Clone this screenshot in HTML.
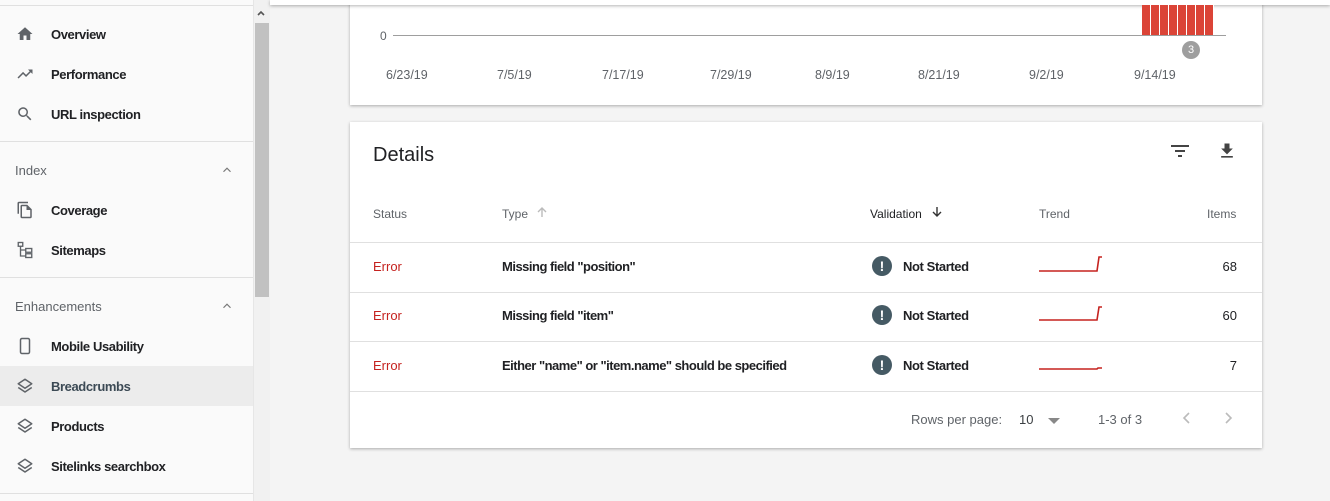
<!DOCTYPE html><html><head><style>
*{margin:0;padding:0;box-sizing:border-box}
body{width:1330px;height:501px;overflow:hidden;background:#f4f4f4;font-family:"Liberation Sans",Arial,sans-serif;position:relative}
.sb{position:absolute;left:0;top:0;width:253px;height:501px;background:#fafafa}
.scroll{position:absolute;left:253px;top:0;width:17px;height:501px;background:#f1f1f1;border-left:1px solid #e6e6e6}
.thumb{position:absolute;left:255px;top:23px;width:14px;height:274px;background:#c1c1c1}
.it{position:absolute;left:0;width:253px;height:40px;display:flex;align-items:center;font-size:13px;font-weight:bold;color:#202124;letter-spacing:-0.4px}
.it svg{position:absolute;left:16px;width:18px;height:18px}
.it span{position:absolute;left:51px}
.hd{position:absolute;left:15px;font-size:13px;color:#5f6368}
.chev{position:absolute;left:220px;width:14px;height:14px}
.line{position:absolute;left:0;width:253px;height:1px;background:#e0e0e0}
.card{position:absolute;left:350px;width:912px;background:#fff;box-shadow:0 1px 3px rgba(0,0,0,.3)}
.lab{position:absolute;top:68px;font-size:12.5px;color:#5f6368}
.th{position:absolute;top:207px;font-size:12px;color:#5f6368}
.row{position:absolute;left:350px;width:912px;height:1px;background:#e0e0e0}
.err{position:absolute;left:373px;font-size:13px;color:#c5221f}
.ty{position:absolute;left:502px;font-size:13px;font-weight:bold;color:#202124;letter-spacing:-0.5px}
.ns{position:absolute;left:903px;font-size:13px;font-weight:bold;color:#202124;letter-spacing:-0.4px}
.ic{position:absolute;left:872px;width:20px;height:20px;border-radius:50%;background:#455a64;color:#fff;font-size:14px;font-weight:bold;text-align:center;line-height:20px}
.num{position:absolute;right:93px;font-size:13px;color:#202124}
</style></head><body>
<div class="sb">
<div class="line" style="top:5px"></div>
<div class="it" style="top:14px"><svg viewBox="0 0 24 24"><path d="M10 20v-6h4v6h5v-8h3L12 3 2 12h3v8z" fill="#5f6368"/></svg><span>Overview</span></div>
<div class="it" style="top:54px"><svg viewBox="0 0 24 24"><path d="M16 6l2.3 2.3-4.9 4.9-4-4L2 16.6 3.4 18l6-6 4 4 6.3-6.3L22 12V6z" fill="#5f6368"/></svg><span>Performance</span></div>
<div class="it" style="top:94px"><svg viewBox="0 0 24 24"><path d="M15.5 14h-.8l-.3-.3A6.5 6.5 0 1 0 9.5 16a6.5 6.5 0 0 0 4.2-1.6l.3.3v.8l5 5 1.5-1.5-5-5zm-6 0a4.5 4.5 0 1 1 0-9 4.5 4.5 0 0 1 0 9z" fill="#5f6368"/></svg><span>URL inspection</span></div>
<div class="line" style="top:141px"></div>
<div class="hd" style="top:163px">Index</div>
<svg class="chev" style="top:163px" viewBox="0 0 24 24"><path d="M6 15l6-6 6 6" stroke="#777" stroke-width="2" fill="none"/></svg>
<div class="it" style="top:190px"><svg viewBox="0 0 24 24"><path d="M16 1H4a2 2 0 0 0-2 2v14h2V3h12zm-1 4l6 6v10a2 2 0 0 1-2 2H8a2 2 0 0 1-2-2V7a2 2 0 0 1 2-2zm-1 2H8v14h11V12h-5z" fill="#5f6368"/></svg><span>Coverage</span></div>
<div class="it" style="top:230px"><svg viewBox="0 0 24 24" fill="none" stroke="#5f6368" stroke-width="1.8"><rect x="3" y="2" width="6" height="5"/><rect x="13" y="10" width="8" height="5"/><rect x="13" y="17" width="8" height="5"/><path d="M6 7v13h7M6 12h7"/></svg><span>Sitemaps</span></div>
<div class="line" style="top:277px"></div>
<div class="hd" style="top:299px">Enhancements</div>
<svg class="chev" style="top:299px" viewBox="0 0 24 24"><path d="M6 15l6-6 6 6" stroke="#777" stroke-width="2" fill="none"/></svg>
<div class="it" style="top:326px"><svg viewBox="0 0 24 24"><rect x="6" y="2" width="12" height="20" rx="2" fill="none" stroke="#5f6368" stroke-width="2"/></svg><span>Mobile Usability</span></div>
<div class="it" style="top:366px;background:#ececec;color:#3c4a55"><svg viewBox="0 0 24 24"><path d="M12 3L3 9l9 6 9-6zM3 14l9 6 9-6" fill="none" stroke="#5f6368" stroke-width="2" stroke-linejoin="round"/></svg><span>Breadcrumbs</span></div>
<div class="it" style="top:406px"><svg viewBox="0 0 24 24"><path d="M12 3L3 9l9 6 9-6zM3 14l9 6 9-6" fill="none" stroke="#5f6368" stroke-width="2" stroke-linejoin="round"/></svg><span>Products</span></div>
<div class="it" style="top:446px"><svg viewBox="0 0 24 24"><path d="M12 3L3 9l9 6 9-6zM3 14l9 6 9-6" fill="none" stroke="#5f6368" stroke-width="2" stroke-linejoin="round"/></svg><span>Sitelinks searchbox</span></div>
<div class="line" style="top:493px"></div>
</div>
<div class="scroll"></div><div class="thumb"></div>
<svg style="position:absolute;left:256px;top:9px;width:10px;height:8px" viewBox="0 0 10 8"><path d="M2 6l3-3 3 3" stroke="#555" stroke-width="1.6" fill="none"/></svg>
<div class="card" style="top:-10px;height:115px"></div>
<div style="position:absolute;left:270px;top:0;width:1060px;height:5px;background:#fff;box-shadow:0 1px 3px rgba(0,0,0,.3)"></div>
<div style="position:absolute;left:380px;top:29px;font-size:12px;color:#5f6368">0</div>
<div style="position:absolute;left:393px;top:35px;width:833px;height:1px;background:#9e9e9e"></div>
<div style="position:absolute;left:1142px;top:5px;width:72px;height:30px;background:repeating-linear-gradient(90deg,#db4437 0 8px,#fff 8px 9px)"></div>
<div style="position:absolute;left:1182px;top:41px;width:18px;height:18px;border-radius:50%;background:#9e9e9e;color:#fff;font-size:11px;text-align:center;line-height:18px">3</div>
<div class="lab" style="left:386px">6/23/19</div><div class="lab" style="left:497px">7/5/19</div><div class="lab" style="left:602px">7/17/19</div><div class="lab" style="left:710px">7/29/19</div><div class="lab" style="left:815px">8/9/19</div><div class="lab" style="left:918px">8/21/19</div><div class="lab" style="left:1029px">9/2/19</div><div class="lab" style="left:1134px">9/14/19</div>
<div class="card" style="top:122px;height:326px"></div>
<div style="position:absolute;left:373px;top:144px;font-size:20px;color:#202124">Details</div>
<svg style="position:absolute;left:1170px;top:142px;width:20px;height:18px" viewBox="0 0 20 18"><path d="M1 4h18M5 9h10M8 14h4" stroke="#444" stroke-width="2"/></svg>
<svg style="position:absolute;left:1217px;top:141px;width:20px;height:20px" viewBox="0 0 24 24"><path d="M19 9h-4V3H9v6H5l7 7zM5 18v2h14v-2z" fill="#444"/></svg>
<div class="th" style="left:373px">Status</div>
<div class="th" style="left:502px">Type</div>
<svg style="position:absolute;left:536px;top:206px;width:12px;height:12px" viewBox="0 0 12 12"><path d="M6 11V2M2 6l4-4 4 4" stroke="#bbb" stroke-width="1.4" fill="none"/></svg>
<div class="th" style="left:870px;color:#202124">Validation</div>
<svg style="position:absolute;left:931px;top:206px;width:12px;height:12px" viewBox="0 0 12 12"><path d="M6 1v9M2 6l4 4 4-4" stroke="#333" stroke-width="1.4" fill="none"/></svg>
<div class="th" style="left:1039px">Trend</div>
<div class="th" style="left:1207px">Items</div>
<div class="row" style="top:242px"></div><div class="row" style="top:292px"></div><div class="row" style="top:341px"></div><div class="row" style="top:391px"></div>
<div class="err" style="top:259px">Error</div><div class="ty" style="top:259px">Missing field "position"</div><div class="ic" style="top:256px">!</div><div class="ns" style="top:259px">Not Started</div><div class="num" style="top:259px">68</div>
<div class="err" style="top:308px">Error</div><div class="ty" style="top:308px">Missing field "item"</div><div class="ic" style="top:305px">!</div><div class="ns" style="top:308px">Not Started</div><div class="num" style="top:308px">60</div>
<div class="err" style="top:358px">Error</div><div class="ty" style="top:358px">Either "name" or "item.name" should be specified</div><div class="ic" style="top:355px">!</div><div class="ns" style="top:358px">Not Started</div><div class="num" style="top:358px">7</div>
<svg style="position:absolute;left:1038px;top:255px;width:66px;height:120px" viewBox="0 0 66 120"><g stroke="#c5221f" stroke-width="1.6" fill="none"><path d="M1 16h58l2-14h3"/><path d="M1 65h58l2-13h3"/><path d="M1 114h58l1-1h4"/></g></svg>
<div style="position:absolute;left:911px;top:412px;font-size:13px;color:#5f6368">Rows per page:</div>
<div style="position:absolute;left:1019px;top:412px;font-size:13px;color:#3c4043">10</div>
<svg style="position:absolute;left:1048px;top:418px;width:12px;height:6px" viewBox="0 0 12 6"><path d="M0 0h12L6 6z" fill="#888"/></svg>
<div style="position:absolute;left:1098px;top:412px;font-size:13px;color:#5f6368">1-3 of 3</div>
<svg style="position:absolute;left:1180px;top:411px;width:12px;height:14px" viewBox="0 0 12 14"><path d="M9 2L4 7l5 5" stroke="#bbb" stroke-width="1.6" fill="none"/></svg>
<svg style="position:absolute;left:1223px;top:411px;width:12px;height:14px" viewBox="0 0 12 14"><path d="M3 2l5 5-5 5" stroke="#bbb" stroke-width="1.6" fill="none"/></svg>
</body></html>
